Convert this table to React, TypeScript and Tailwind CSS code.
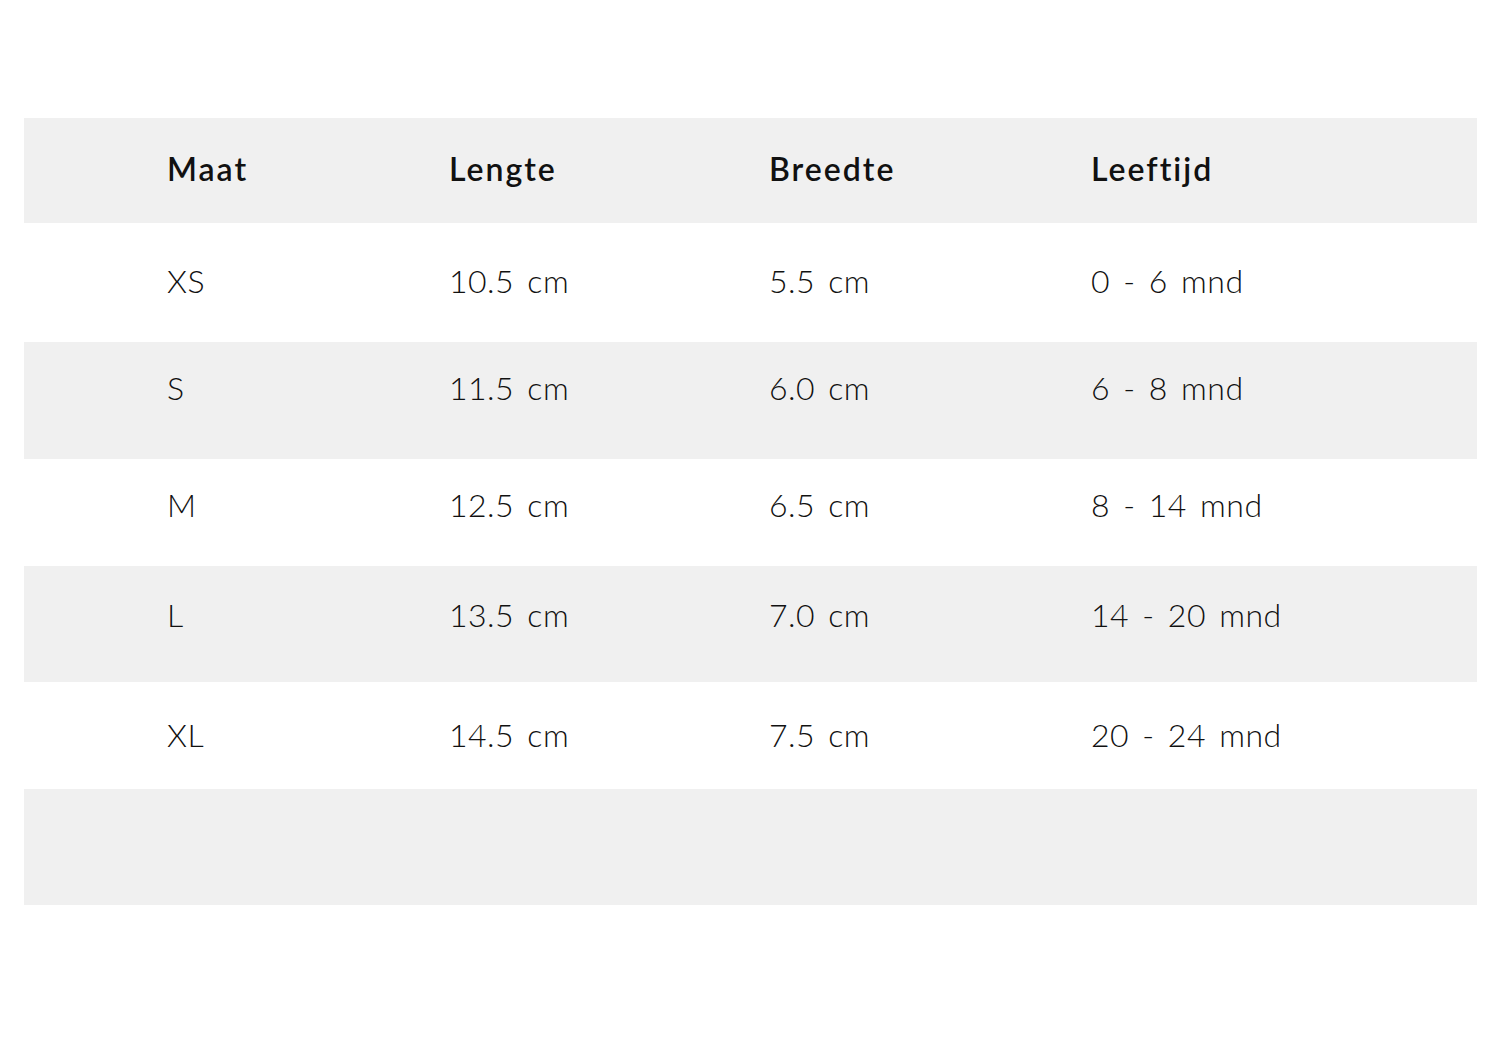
const rows = [
  { maat: "XS", lengte: "10.5 cm", breedte: "5.5 cm", leeftijd: "0 - 6 mnd", h: "h-[119px]", pt: "pt-[42px]", bg: "bg-white" },
  { maat: "S", lengte: "11.5 cm", breedte: "6.0 cm", leeftijd: "6 - 8 mnd", h: "h-[117px]", pt: "pt-[30px]", bg: "bg-[#f0f0f0]" },
  { maat: "M", lengte: "12.5 cm", breedte: "6.5 cm", leeftijd: "8 - 14 mnd", h: "h-[107px]", pt: "pt-[30px]", bg: "bg-white" },
  { maat: "L", lengte: "13.5 cm", breedte: "7.0 cm", leeftijd: "14 - 20 mnd", h: "h-[116px]", pt: "pt-[33px]", bg: "bg-[#f0f0f0]" },
  { maat: "XL", lengte: "14.5 cm", breedte: "7.5 cm", leeftijd: "20 - 24 mnd", h: "h-[107px]", pt: "pt-[37px]", bg: "bg-white" },
];

const cols = "grid grid-cols-[282px_320px_322px_1fr] pl-[143px]";

export default function App() {
  return (
    <div className="w-[1500px] h-[1062px] bg-white pt-[118px] px-[24px] text-[#111] font-['Lato',sans-serif]">
      <div className="w-[1453px]">
        {/* header */}
        <div className={`${cols} h-[105px] pt-[35px] bg-[#f0f0f0] text-[32px] leading-none font-semibold tracking-[2px]`}>
          <div>Maat</div>
          <div>Lengte</div>
          <div>Breedte</div>
          <div>Leeftijd</div>
        </div>

        {rows.map((r) => (
          <div key={r.maat} className={`${cols} ${r.h} ${r.pt} ${r.bg} text-[32px] leading-none font-light tracking-[0.5px] [word-spacing:4px]`}>
            <div>{r.maat}</div>
            <div>{r.lengte}</div>
            <div>{r.breedte}</div>
            <div>{r.leeftijd}</div>
          </div>
        ))}

        {/* empty row */}
        <div className="h-[116px] bg-[#f0f0f0]"></div>
      </div>
    </div>
  );
}
